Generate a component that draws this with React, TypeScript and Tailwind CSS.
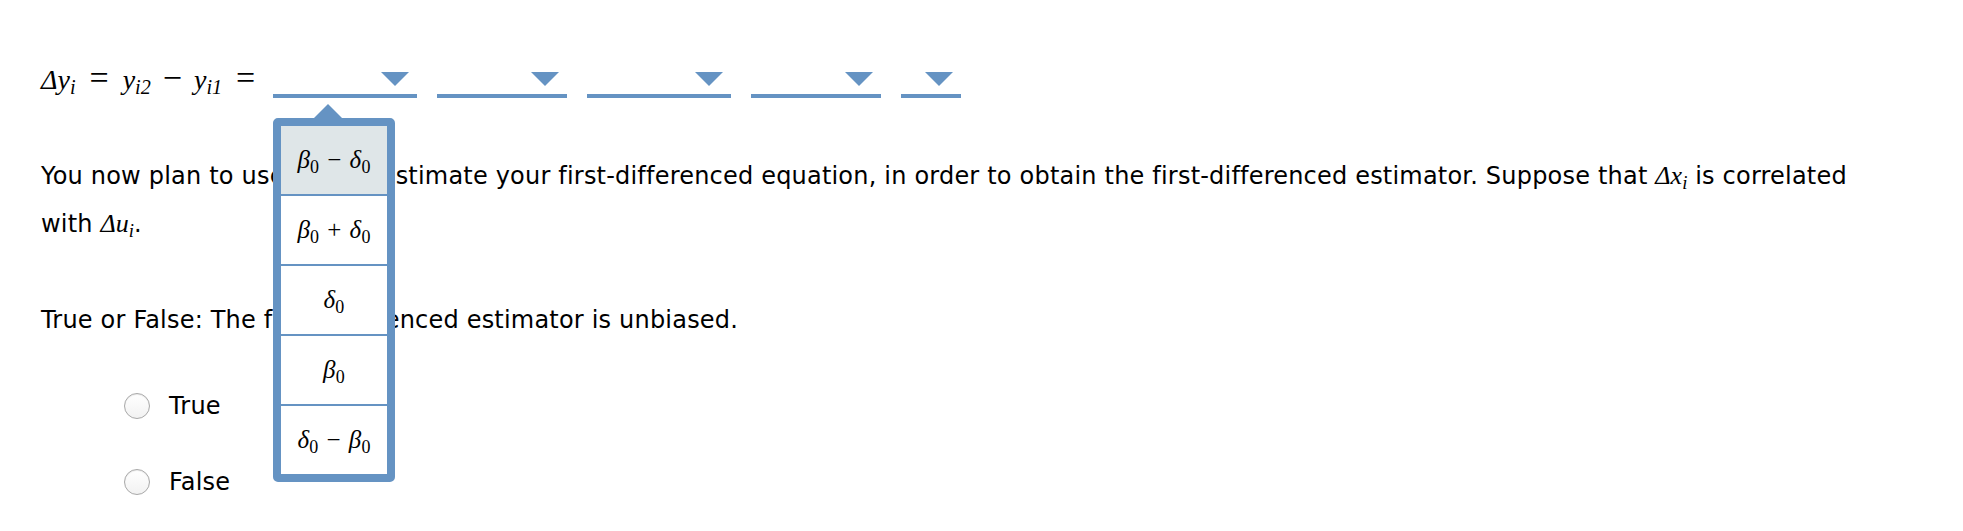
import React from 'react';

const blanks = ['w-[144px]', 'w-[130px]', 'w-[144px]', 'w-[130px]', 'w-[60px]'];

function Caret({ up }: { up?: boolean }) {
  return (
    <svg width="28" height="14" viewBox="0 0 28 14" className="block">
      <polygon points={up ? '0,14 28,14 14,0' : '0,0 28,0 14,14'} fill="#6593c3" />
    </svg>
  );
}

// italic variable with optional subscript; numeric subscripts stay upright
function V({ c, s, upright }: { c: string; s?: string; upright?: boolean }) {
  return (
    <span>
      <i>{c}</i>
      {s && <sub className={upright ? 'text-[72%] not-italic' : 'text-[72%] italic'}>{s}</sub>}
    </span>
  );
}

function Op({ c, gap }: { c: string; gap: string }) {
  return <span className={`${gap} not-italic`}>{c}</span>;
}

const options = [
  <><V c="β" s="0" upright /><Op c="−" gap="mx-[8px]" /><V c="δ" s="0" upright /></>,
  <><V c="β" s="0" upright /><Op c="+" gap="mx-[8px]" /><V c="δ" s="0" upright /></>,
  <V c="δ" s="0" upright />,
  <V c="β" s="0" upright />,
  <><V c="δ" s="0" upright /><Op c="−" gap="mx-[8px]" /><V c="β" s="0" upright /></>,
];

function Menu() {
  return (
    <div className="absolute left-0 top-full z-10 mt-[6px] w-[122px]">
      <div className="ml-[41px]">
        <Caret up />
      </div>
      <div className="overflow-hidden rounded-[5px] border-[8px] border-[#6593c3] bg-white">
        {options.map((o, i) => (
          <div
            key={i}
            className={
              i === 0
                ? "flex h-[68px] items-center justify-center bg-[#dfe6e8] font-['Liberation_Serif',serif] text-[25px] text-black"
                : "flex h-[70px] items-center justify-center border-t-2 border-[#6593c3] font-['Liberation_Serif',serif] text-[25px] text-black"
            }
          >
            {o}
          </div>
        ))}
      </div>
    </div>
  );
}

function Blank({ width, open }: { width: string; open?: boolean }) {
  return (
    <div className={`relative ${width}`}>
      <div className="flex h-[22px] justify-end pr-2">
        <Caret />
      </div>
      <div className="h-[4px] bg-[#6593c3]" />
      {open && <Menu />}
    </div>
  );
}

function Radio({ label }: { label: string }) {
  return (
    <label className="flex h-[48px] items-center">
      <span className="ml-[83px] h-[26px] w-[26px] rounded-full border border-[#a8a8a8] bg-gradient-to-b from-white to-[#f2f2f2] shadow-[inset_0_1px_1px_rgba(0,0,0,0.08)]" />
      <span className="ml-[19px]">{label}</span>
    </label>
  );
}

export default function App() {
  return (
    <div className="min-h-[531px] bg-white pl-[41px] pt-[72px] font-['DejaVu_Sans',Verdana,sans-serif] text-[24px] tracking-[0.2px] text-black">
      <div className="flex items-start">
        <div className="w-[232px] whitespace-nowrap font-['Liberation_Serif',serif] text-[28px] leading-[12px] tracking-normal">
          <V c="Δy" s="i" />
          <Op c="=" gap="mx-[14px] text-[34px]" />
          <V c="y" s="i2" />
          <Op c="−" gap="mx-[12px] text-[34px]" />
          <V c="y" s="i1" />
          <Op c="=" gap="ml-[14px] text-[34px]" />
        </div>
        <div className="flex gap-[20px]">
          {blanks.map((w, i) => (
            <Blank key={i} width={w} open={i === 0} />
          ))}
        </div>
      </div>

      <p className="mt-[54px] leading-[48px]">
        You now plan to use OLS to estimate your first-differenced equation, in order to obtain the first-differenced
        estimator. Suppose that{' '}
        <span className="font-['Liberation_Serif',serif] text-[26px] tracking-normal">
          <V c="Δx" s="i" />
        </span>{' '}
        is correlated
        <br />
        with{' '}
        <span className="font-['Liberation_Serif',serif] text-[26px] tracking-normal">
          <V c="Δu" s="i" />
        </span>
        .
      </p>

      <p className="mt-[48px] leading-[48px]">True or False: The first-differenced estimator is unbiased.</p>

      <div className="mt-[38px] flex flex-col gap-[28px] leading-[48px]">
        <Radio label="True" />
        <Radio label="False" />
      </div>
    </div>
  );
}
